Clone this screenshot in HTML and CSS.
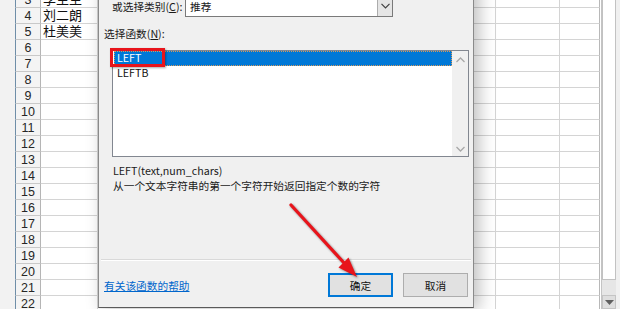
FILE: index.html
```html
<!DOCTYPE html>
<html lang="zh">
<head>
<meta charset="utf-8">
<title>插入函数</title>
<link rel="stylesheet" href="styles.css">
</head>
<body>
<div class="sheet">
  <div class="gutter"></div>
  <div class="grid">
    <div class="row"><div class="rh">3</div><div class="c ca">李生生</div><div class="c cb"></div><div class="c cc"></div><div class="c cd"></div><div class="edge"></div></div>
    <div class="row"><div class="rh">4</div><div class="c ca">刘二朗</div><div class="c cb"></div><div class="c cc"></div><div class="c cd"></div><div class="edge"></div></div>
    <div class="row"><div class="rh">5</div><div class="c ca">杜美美</div><div class="c cb"></div><div class="c cc"></div><div class="c cd"></div><div class="edge"></div></div>
    <div class="row"><div class="rh">6</div><div class="c ca"></div><div class="c cb"></div><div class="c cc"></div><div class="c cd"></div><div class="edge"></div></div>
    <div class="row"><div class="rh">7</div><div class="c ca"></div><div class="c cb"></div><div class="c cc"></div><div class="c cd"></div><div class="edge"></div></div>
    <div class="row"><div class="rh">8</div><div class="c ca"></div><div class="c cb"></div><div class="c cc"></div><div class="c cd"></div><div class="edge"></div></div>
    <div class="row"><div class="rh">9</div><div class="c ca"></div><div class="c cb"></div><div class="c cc"></div><div class="c cd"></div><div class="edge"></div></div>
    <div class="row"><div class="rh">10</div><div class="c ca"></div><div class="c cb"></div><div class="c cc"></div><div class="c cd"></div><div class="edge"></div></div>
    <div class="row"><div class="rh">11</div><div class="c ca"></div><div class="c cb"></div><div class="c cc"></div><div class="c cd"></div><div class="edge"></div></div>
    <div class="row"><div class="rh">12</div><div class="c ca"></div><div class="c cb"></div><div class="c cc"></div><div class="c cd"></div><div class="edge"></div></div>
    <div class="row"><div class="rh">13</div><div class="c ca"></div><div class="c cb"></div><div class="c cc"></div><div class="c cd"></div><div class="edge"></div></div>
    <div class="row"><div class="rh">14</div><div class="c ca"></div><div class="c cb"></div><div class="c cc"></div><div class="c cd"></div><div class="edge"></div></div>
    <div class="row"><div class="rh">15</div><div class="c ca"></div><div class="c cb"></div><div class="c cc"></div><div class="c cd"></div><div class="edge"></div></div>
    <div class="row"><div class="rh">16</div><div class="c ca"></div><div class="c cb"></div><div class="c cc"></div><div class="c cd"></div><div class="edge"></div></div>
    <div class="row"><div class="rh">17</div><div class="c ca"></div><div class="c cb"></div><div class="c cc"></div><div class="c cd"></div><div class="edge"></div></div>
    <div class="row"><div class="rh">18</div><div class="c ca"></div><div class="c cb"></div><div class="c cc"></div><div class="c cd"></div><div class="edge"></div></div>
    <div class="row"><div class="rh">19</div><div class="c ca"></div><div class="c cb"></div><div class="c cc"></div><div class="c cd"></div><div class="edge"></div></div>
    <div class="row"><div class="rh">20</div><div class="c ca"></div><div class="c cb"></div><div class="c cc"></div><div class="c cd"></div><div class="edge"></div></div>
    <div class="row"><div class="rh">21</div><div class="c ca"></div><div class="c cb"></div><div class="c cc"></div><div class="c cd"></div><div class="edge"></div></div>
    <div class="row"><div class="rh">22</div><div class="c ca"></div><div class="c cb"></div><div class="c cc"></div><div class="c cd"></div><div class="edge"></div></div>
  </div>
  <div class="vscroll">
    <div class="thumb"></div>
    <div class="track"></div>
    <div class="sbtn"><svg width="9" height="5" viewBox="0 0 9 5"><path d="M0 0H9L4.5 5Z" fill="#606060"/></svg></div>
  </div>
  <div class="rgutter"></div>
</div>

<div class="dialog">
  <div class="catrow">
    <span class="lbl">或选择类别(<u>C</u>):</span>
    <div class="combo">
      <span class="combo-text">推荐</span>
      <span class="combo-btn"><svg width="9" height="6" viewBox="0 0 9 6"><path d="M0.5 0.8L4.5 4.8L8.5 0.8" fill="none" stroke="#404040" stroke-width="1.2"/></svg></span>
    </div>
  </div>
  <div class="funclbl">选择函数(<u>N</u>):</div>
  <div class="listbox">
    <div class="items">
      <div class="item sel">LEFT</div>
      <div class="item">LEFTB</div>
    </div>
    <div class="lscroll">
      <svg width="9" height="6" viewBox="0 0 9 6"><path d="M0.5 5L4.5 1L8.5 5" fill="none" stroke="#a8a8a8" stroke-width="1.3"/></svg>
      <svg width="9" height="6" viewBox="0 0 9 6"><path d="M0.5 1L4.5 5L8.5 1" fill="none" stroke="#a8a8a8" stroke-width="1.3"/></svg>
    </div>
  </div>
  <div class="desc1">LEFT(text,num_chars)</div>
  <div class="desc2">从一个文本字符串的第一个字符开始返回指定个数的字符</div>
  <div class="sep"></div>
  <div class="btnrow">
    <a class="help" href="#">有关该函数的帮助</a>
    <div class="btns">
      <button class="btn default">确定</button>
      <button class="btn">取消</button>
    </div>
  </div>
</div>

<div class="hl"></div>

<svg class="arrow" width="620" height="309" viewBox="0 0 620 309">
  <g class="arrow-g">
    <line x1="291" y1="205" x2="345" y2="264" stroke="#e8141b" stroke-width="3.2" stroke-linecap="round"/>
    <polygon points="357,277 338.5,267.5 348.5,257.5" fill="#e8141b"/>
  </g>
</svg>
</body>
</html>
```

FILE: styles.css
```css
* { box-sizing: border-box; }
html, body {
  margin: 0;
  padding: 0;
  width: 620px;
  height: 309px;
  overflow: hidden;
  background: #ffffff;
}
body {
  position: relative;
  font-family: "Noto Sans CJK SC", "Noto Sans", sans-serif;
}

/* spreadsheet background */
.sheet {
  display: flex;
  height: 309px;
}
.gutter {
  width: 15px;
  flex: none;
  background: #f2f2f2;
}
.grid {
  display: flex;
  flex-direction: column;
  margin-top: -8px;
  flex: none;
}
.row {
  display: flex;
  height: 16px;
  flex: none;
}
.rh {
  width: 26px;
  height: 16px;
  border-left: 1px solid #6f8ea8;
  border-right: 1px solid #b5b5b5;
  border-bottom: 1px solid #c9c9c9;
  background: #f4f4f4;
  color: #262626;
  font-family: "Liberation Sans", sans-serif;
  font-size: 12.5px;
  line-height: 16px;
  text-align: center;
}
.c {
  height: 16px;
  border-right: 1px solid #d4d4d4;
  border-bottom: 1px solid #d4d4d4;
  background: #ffffff;
  font-family: "Liberation Sans", "Noto Sans CJK SC", sans-serif;
  font-size: 13px;
  line-height: 15px;
  color: #111;
  padding-left: 2px;
  white-space: nowrap;
}
.ca { width: 57px; }
.cb { width: 398px; }
.cc { width: 64px; }
.cd { width: 40px; border-right: 1px solid #b8b8b8; }
.edge {
  width: 2px;
  height: 16px;
  border-right: 1px solid #c4c4c4;
  background: #fff;
}
.vscroll {
  width: 14px;
  flex: none;
  display: flex;
  flex-direction: column;
  background: #e9e9e9;
}
.thumb {
  height: 280px;
  background: #ffffff;
  border: 1px solid #c2c2c2;
  border-top: none;
}
.track {
  height: 15px;
  background: #e6e6e6;
}
.sbtn {
  height: 14px;
  background: #dedede;
  border: 1px solid #c4c4c4;
  display: flex;
  align-items: center;
  justify-content: center;
}
.rgutter {
  flex: 1;
  background: #f0f0f0;
}

/* dialog */
.dialog {
  position: absolute;
  left: 98px;
  top: -40px;
  width: 376px;
  height: 348px;
  background: #f0f0f0;
  border: 1px solid #8a8a8a;
  border-bottom-color: #5a5a5a;
  box-shadow: 5px 2px 16px rgba(0, 0, 0, 0.26);
  display: flex;
  flex-direction: column;
  font-size: 10.7px;
  color: #1a1a1a;
}
.dialog u { text-decoration: underline; }
.catrow {
  display: flex;
  align-items: center;
  margin-top: 34px;
  margin-left: 13px;
  height: 22px;
}
.lbl {
  width: 73px;
  white-space: nowrap;
}
.combo {
  width: 208px;
  height: 22px;
  background: #ffffff;
  border: 1px solid #7a7a7a;
  display: flex;
  align-items: center;
  justify-content: space-between;
}
.combo-text { padding-left: 4px; }
.combo-btn {
  width: 15px;
  height: 20px;
  background: #e5e5e5;
  border-left: 1px solid #acacac;
  display: flex;
  align-items: center;
  justify-content: center;
}
.funclbl {
  margin-top: 10px;
  margin-left: 5px;
  height: 14px;
  line-height: 14px;
}
.listbox {
  margin-top: 9px;
  margin-left: 13px;
  width: 357px;
  height: 107px;
  background: #ffffff;
  border: 1px solid #828790;
  display: flex;
}
.items {
  flex: 1;
  padding-left: 1px;
}
.item {
  height: 14.5px;
  line-height: 14px;
  padding-left: 3px;
  font-size: 10.7px;
  color: #111;
}
.item.sel {
  background: #0078d7;
  color: #ffffff;
  border: 1px dotted #d89a5a;
  padding-left: 2px;
  line-height: 12.5px;
}
.lscroll {
  width: 16px;
  background: #f0f0f0;
  display: flex;
  flex-direction: column;
  align-items: center;
  justify-content: space-between;
  padding: 6px 0 4px;
}
.desc1 {
  margin-top: 7px;
  margin-left: 14px;
  height: 14px;
  line-height: 14px;
}
.desc2 {
  margin-top: 1px;
  margin-left: 14px;
  height: 14px;
  line-height: 14px;
}
.sep {
  margin-top: 66px;
  margin-left: 2px;
  margin-right: 2px;
  height: 2px;
  border-top: 1px solid #d9d9d9;
  border-bottom: 1px solid #ffffff;
}
.btnrow {
  margin-top: 12px;
  display: flex;
  align-items: center;
  justify-content: space-between;
  padding-left: 5px;
  padding-right: 5px;
}
.help {
  color: #0066cc;
  text-decoration: underline;
}
.btns {
  display: flex;
  gap: 10px;
}
.btn {
  width: 65px;
  height: 24px;
  background: #e1e1e1;
  border: 1px solid #adadad;
  font-family: "Noto Sans CJK SC", sans-serif;
  font-size: 10.7px;
  color: #111;
  padding: 0;
}
.btn.default {
  border: 2px solid #0078d7;
}

/* red highlight box around LEFT */
.hl {
  position: absolute;
  left: 110px;
  top: 48px;
  width: 55px;
  height: 19px;
  border: 3px solid #e8141b;
  box-shadow: 1px 1px 2px rgba(0, 0, 0, 0.35);
}

.arrow {
  position: absolute;
  left: 0;
  top: 0;
  pointer-events: none;
}
.arrow-g {
  filter: drop-shadow(1.5px 1.5px 1.2px rgba(0, 0, 0, 0.45));
}
```
